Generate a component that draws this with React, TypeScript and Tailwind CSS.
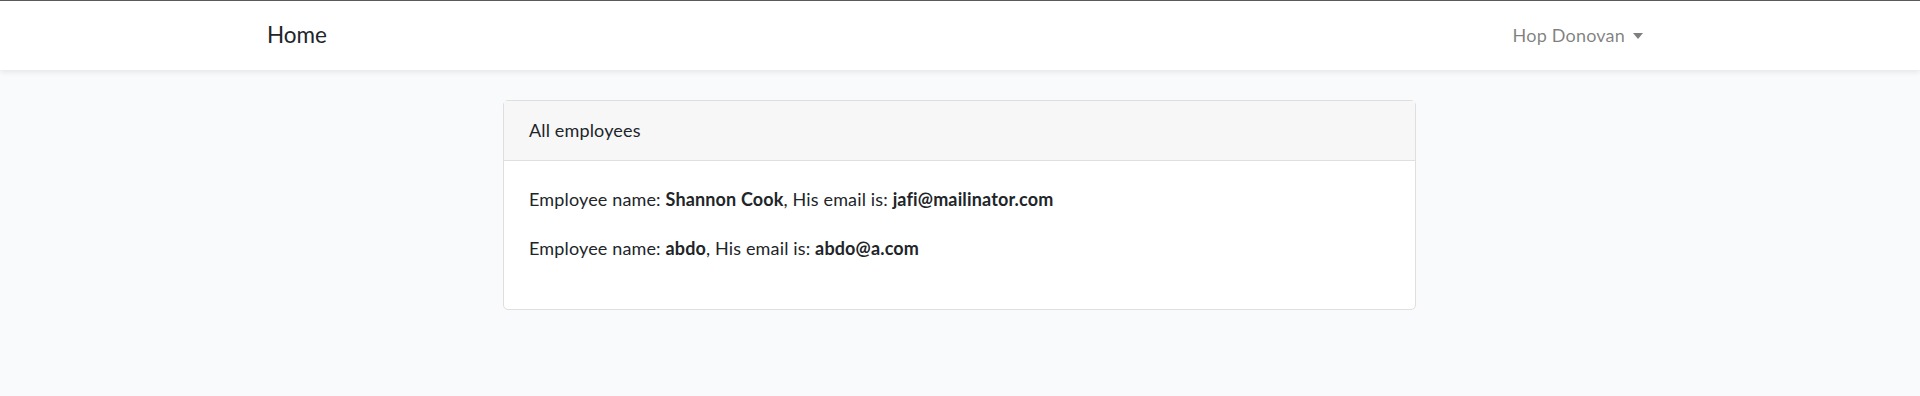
import React from 'react';

const employees = [
    { name: 'Shannon Cook', email: 'jafi@mailinator.com' },
    { name: 'abdo', email: 'abdo@a.com' },
];

const App: React.FC = () => {
    return (
        <div className="min-h-[396px] bg-[#f8fafc] text-[18px] leading-[28.8px] tracking-[0.15px] text-[#212529]" style={{ fontFamily: 'Lato, "Noto Sans", sans-serif' }}>
            <nav className="h-[70px] border-t border-[#5a5a5a] bg-white shadow-[0_2.5px_5px_rgba(0,0,0,0.075)]">
                <div className="flex h-full items-center justify-between pl-[267px] pr-[277px]">
                    <a className="text-[22.5px] tracking-normal text-[#212529]">Home</a>
                    <a className="flex items-center gap-[8px] tracking-[0.2px] text-[rgba(0,0,0,0.5)]">
                        Hop Donovan
                        <span className="mt-[2px] h-0 w-0 border-x-[5.5px] border-t-[6.5px] border-x-transparent border-t-[rgba(0,0,0,0.5)]" />
                    </a>
                </div>
            </nav>

            <main className="pt-[30px] pl-[503px]">
                <div className="w-[913px] rounded-[5px] border border-[#dfdfdf] bg-white">
                    <div className="border-b border-[#dfdfdf] bg-[#f7f7f7] px-[25px] py-[15px]">All employees</div>
                    <div className="px-[25px] pt-[24px] pb-[27px]">
                        {employees.map((emp) => (
                            <p key={emp.email} className="mb-[20px]">
                                Employee name: <b className="font-bold">{emp.name}</b>, His email is: <b className="font-bold">{emp.email}</b>
                            </p>
                        ))}
                    </div>
                </div>
            </main>
        </div>
    );
};

export default App;
